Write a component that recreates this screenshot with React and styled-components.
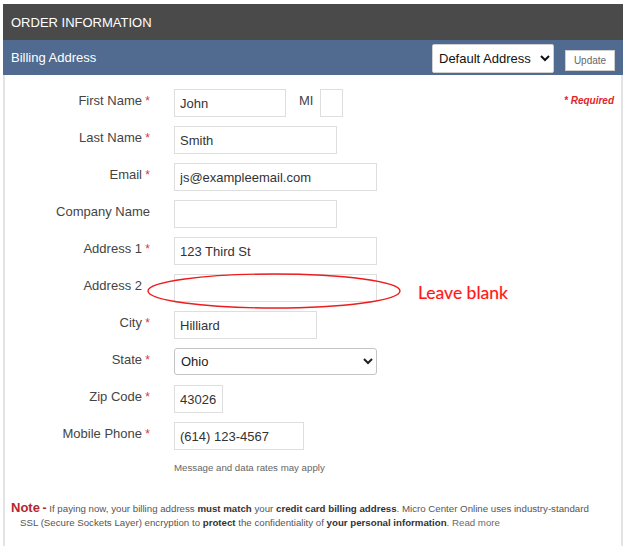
import React from "react";
import styled, { createGlobalStyle } from "styled-components";

const GlobalStyle = createGlobalStyle`
  html, body {
    margin: 0;
    padding: 0;
    background: #ffffff;
  }
  body {
    font-family: "Liberation Sans", Arial, sans-serif;
  }
`;

const fields = [
  { label: "First Name", required: true, value: "John", width: 112, mi: true },
  { label: "Last Name", required: true, value: "Smith", width: 163 },
  { label: "Email", required: true, value: "js@exampleemail.com", width: 203 },
  { label: "Company Name", value: "", width: 163 },
  { label: "Address 1", required: true, value: "123 Third St", width: 203 },
  { label: "Address 2", spacer: true, value: "", width: 203, hint: "Leave blank" },
  { label: "City", required: true, value: "Hilliard", width: 143 },
  { label: "State", required: true, select: ["Ohio"], width: 203 },
  { label: "Zip Code", required: true, value: "43026", width: 49 },
  { label: "Mobile Phone", required: true, value: "(614) 123-4567", width: 130 },
];

const App = () => {
  return (
    <>
      <GlobalStyle />
      <Page>
        <Header>ORDER INFORMATION</Header>
        <SubBar>
          <SubTitle>Billing Address</SubTitle>
          <AddressSelect defaultValue="default">
            <option value="default">Default Address</option>
          </AddressSelect>
          <UpdateButton>Update</UpdateButton>
        </SubBar>
        <Panel>
          <Form>
            {fields.map((f) => (
              <Row key={f.label}>
                <Label>
                  {f.label}
                  {(f.required || f.spacer) && (
                    <Star $ghost={f.spacer}> *</Star>
                  )}
                </Label>
                <Field>
                  {f.select ? (
                    <StateSelect $width={f.width} defaultValue={f.select[0]}>
                      {f.select.map((o) => (
                        <option key={o}>{o}</option>
                      ))}
                    </StateSelect>
                  ) : (
                    <Input $width={f.width} defaultValue={f.value} />
                  )}
                  {f.mi && (
                    <>
                      <MiLabel>MI</MiLabel>
                      <Input $width={23} defaultValue="" />
                      <Required>* Required</Required>
                    </>
                  )}
                  {f.hint && (
                    <>
                      <Circle width="256" height="38" viewBox="0 0 256 38">
                        <ellipse
                          cx="128"
                          cy="19"
                          rx="126"
                          ry="17"
                          fill="none"
                          stroke="#ee1c1c"
                          strokeWidth="1.4"
                        />
                      </Circle>
                      <Hint>{f.hint}</Hint>
                    </>
                  )}
                </Field>
              </Row>
            ))}
          </Form>
          <HelpText>Message and data rates may apply</HelpText>
          <Note>
            <NoteLine>
              <NoteTitle>Note</NoteTitle> <NoteDash>-</NoteDash> If paying
              now, your billing address <b>must match</b> your{" "}
              <b>credit card billing address</b>. Micro Center Online uses
              industry-standard
            </NoteLine>
            <NoteLine $indent>
              SSL (Secure Sockets Layer) encryption to <b>protect</b> the
              confidentiality of <b>your personal information</b>.{" "}
              <ReadMore>Read more</ReadMore>
            </NoteLine>
          </Note>
        </Panel>
      </Page>
    </>
  );
};

export default App;

const Page = styled.div`
  width: 620px;
  margin: 4px 0 0 3px;
  height: 542px;
  display: flex;
  flex-direction: column;
`;

const Header = styled.div`
  height: 36px;
  background-color: #4a4a4a;
  color: #ffffff;
  font-size: 13px;
  display: flex;
  align-items: center;
  padding-left: 8px;
`;

const SubBar = styled.div`
  height: 35px;
  background-color: #506b8f;
  display: flex;
  align-items: center;
  padding: 0 8px;
`;

const SubTitle = styled.div`
  color: #ffffff;
  font-size: 13px;
  flex: 1;
`;

const AddressSelect = styled.select`
  width: 122px;
  height: 29px;
  font-family: "Liberation Sans", Arial, sans-serif;
  font-size: 13px;
  color: #111;
  background: #ffffff;
  border: 1px solid #d0d0d0;
  border-radius: 2px;
  padding: 0 2px;
  margin-top: 2px;
`;

const UpdateButton = styled.button`
  width: 50px;
  height: 21px;
  margin-left: 11px;
  margin-top: 6px;
  background: #ffffff;
  border: 1px solid #cfcfcf;
  border-radius: 0;
  font-family: "Liberation Sans", Arial, sans-serif;
  font-size: 10px;
  color: #666;
  padding: 0;
`;

const Panel = styled.div`
  flex: 1;
  border-left: 2px solid #e4e4e4;
  border-right: 2px solid #e4e4e4;
  padding: 14px 7px 0 0;
`;

const Form = styled.div`
  display: flex;
  flex-direction: column;
  gap: 9px;
`;

const Row = styled.div`
  display: flex;
  align-items: flex-start;
  height: 28px;
`;

const Label = styled.div`
  width: 145px;
  flex-shrink: 0;
  text-align: right;
  font-size: 13px;
  line-height: 20px;
  padding-top: 2px;
  color: #444;
`;

const Star = styled.span`
  color: #d9363e;
  font-size: 12px;
  visibility: ${(p) => (p.$ghost ? "hidden" : "visible")};
`;

const Field = styled.div`
  position: relative;
  margin-left: 24px;
  flex: 1;
  display: flex;
  align-items: flex-start;
`;

const Input = styled.input`
  box-sizing: border-box;
  width: ${(p) => p.$width}px;
  height: 28px;
  border: 1px solid #dedede;
  border-radius: 0;
  padding: 0 5px;
  font-family: "Liberation Sans", Arial, sans-serif;
  font-size: 13px;
  color: #333;
  background: #fff;
  outline: none;
`;

const StateSelect = styled.select`
  box-sizing: border-box;
  width: ${(p) => p.$width}px;
  height: 27px;
  border: 1px solid #c4c4c4;
  border-radius: 3px;
  padding: 0 2px;
  font-family: "Liberation Sans", Arial, sans-serif;
  font-size: 13px;
  color: #222;
  background: #fff;
`;

const MiLabel = styled.div`
  font-size: 13px;
  line-height: 20px;
  padding-top: 2px;
  color: #444;
  margin: 0 7px 0 13px;
`;

const Required = styled.div`
  margin-left: auto;
  font-size: 10px;
  font-weight: bold;
  font-style: italic;
  color: #e0262c;
  padding-top: 6px;
`;

const Circle = styled.svg`
  position: absolute;
  left: -28px;
  top: -2px;
  overflow: visible;
  pointer-events: none;
`;

const Hint = styled.div`
  margin-left: 41px;
  font-family: Lato, "Open Sans", sans-serif;
  font-size: 17.5px;
  line-height: 20px;
  color: #ff1a1a;
  padding-top: 9px;
  text-shadow: 0 0 1px rgba(255, 0, 0, 0.35);
`;

const HelpText = styled.div`
  margin: 11px 0 0 169px;
  font-size: 9.7px;
  line-height: 14px;
  color: #666;
`;

const Note = styled.div`
  margin-top: 25px;
  font-size: 9.7px;
  line-height: 15px;
  color: #555;

  b {
    color: #333;
  }
`;

const NoteLine = styled.div`
  padding-left: ${(p) => (p.$indent ? "15px" : "6px")};
  white-space: nowrap;
  height: 15px;
`;

const NoteTitle = styled.span`
  font-size: 13px;
  line-height: 15px;
  font-weight: bold;
  color: #b3262e;
`;

const NoteDash = styled.span`
  font-size: 12px;
  line-height: 15px;
  font-weight: bold;
  color: #b3262e;
`;

const ReadMore = styled.span`
  color: #6a6a6a;
`;
